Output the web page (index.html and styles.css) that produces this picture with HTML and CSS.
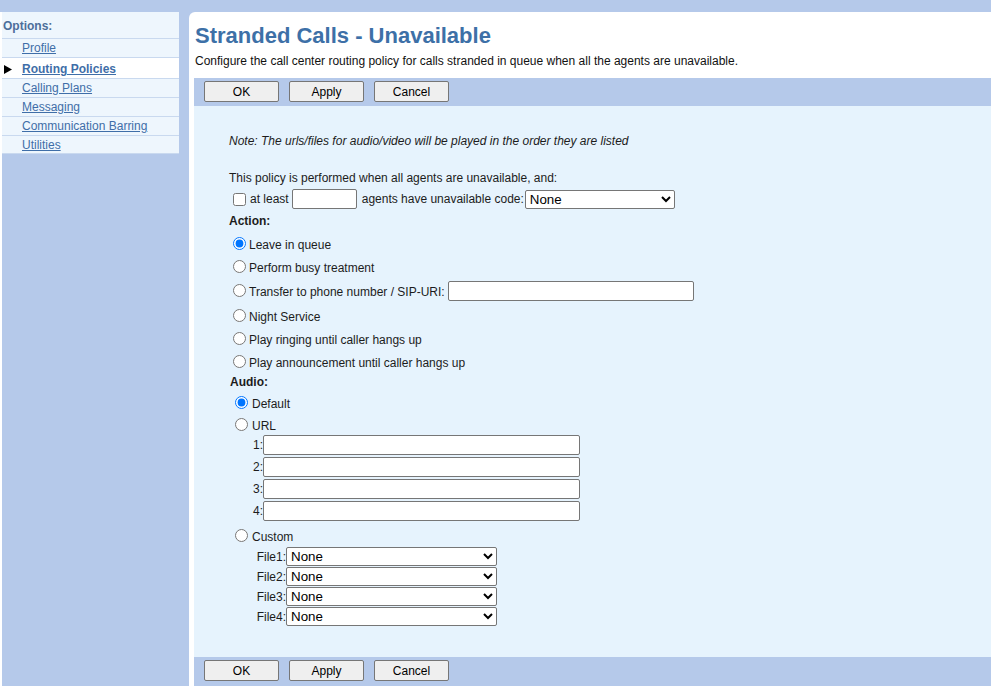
FILE: index.html
```html
<!DOCTYPE html>
<html>
<head>
<meta charset="utf-8">
<title>Stranded Calls - Unavailable</title>
<link rel="stylesheet" href="styles.css">
</head>
<body>
<div class="page">
  <aside class="side">
    <div class="menu">
      <div class="menu-head">Options:</div>
      <div class="menu-row"><a href="#">Profile</a></div>
      <div class="menu-row current">
        <svg class="arrow" width="8" height="9" viewBox="0 0 8 9"><polygon points="0,0 8,4.5 0,9" fill="#000"/></svg>
        <a href="#">Routing Policies</a>
      </div>
      <div class="menu-row"><a href="#">Calling Plans</a></div>
      <div class="menu-row"><a href="#">Messaging</a></div>
      <div class="menu-row"><a href="#">Communication Barring</a></div>
      <div class="menu-row"><a href="#">Utilities</a></div>
    </div>
  </aside>
  <main class="main">
    <div class="header">
      <h1 class="title">Stranded Calls - Unavailable</h1>
      <p class="desc">Configure the call center routing policy for calls stranded in queue when all the agents are unavailable.</p>
    </div>
    <div class="panel">
      <div class="bar bar-top">
        <button class="btn">OK</button>
        <button class="btn">Apply</button>
        <button class="btn">Cancel</button>
      </div>
      <div class="form">
        <div class="note">Note: The urls/files for audio/video will be played in the order they are listed</div>
        <div class="policy">This policy is performed when all agents are unavailable, and:</div>
        <div class="cond-row">
          <input type="checkbox" class="chk">
          <span>at least</span>
          <input type="text" class="txt count">
          <span class="agents">agents have unavailable code:</span>
          <select class="sel code"><option>None</option></select>
        </div>
        <div class="section-label">Action:</div>
        <div class="action-list">
          <label class="radio-row"><input type="radio" name="act" class="rad" checked><span class="rl">Leave in queue</span></label>
          <label class="radio-row"><input type="radio" name="act" class="rad"><span class="rl">Perform busy treatment</span></label>
          <label class="radio-row tall"><input type="radio" name="act" class="rad"><span class="rl">Transfer to phone number / SIP-URI:</span><input type="text" class="txt transfer"></label>
          <label class="radio-row"><input type="radio" name="act" class="rad"><span class="rl">Night Service</span></label>
          <label class="radio-row"><input type="radio" name="act" class="rad"><span class="rl">Play ringing until caller hangs up</span></label>
          <label class="radio-row"><input type="radio" name="act" class="rad"><span class="rl">Play announcement until caller hangs up</span></label>
        </div>
        <div class="section-label audio-label">Audio:</div>
        <div class="audio-list">
          <label class="radio-row audio"><input type="radio" name="aud" class="rad" checked><span class="rl">Default</span></label>
          <label class="radio-row audio url"><input type="radio" name="aud" class="rad"><span class="rl">URL</span></label>
          <div class="url-row"><span class="num">1:</span><input type="text" class="txt url-in"></div>
          <div class="url-row"><span class="num">2:</span><input type="text" class="txt url-in"></div>
          <div class="url-row"><span class="num">3:</span><input type="text" class="txt url-in"></div>
          <div class="url-row"><span class="num">4:</span><input type="text" class="txt url-in"></div>
          <label class="radio-row audio custom"><input type="radio" name="aud" class="rad"><span class="rl">Custom</span></label>
          <div class="file-row"><span class="flabel">File1:</span><select class="sel file"><option>None</option></select></div>
          <div class="file-row"><span class="flabel">File2:</span><select class="sel file"><option>None</option></select></div>
          <div class="file-row"><span class="flabel">File3:</span><select class="sel file"><option>None</option></select></div>
          <div class="file-row"><span class="flabel">File4:</span><select class="sel file"><option>None</option></select></div>
        </div>
      </div>
      <div class="bar bar-bottom">
        <button class="btn">OK</button>
        <button class="btn">Apply</button>
        <button class="btn">Cancel</button>
      </div>
    </div>
  </main>
</div>
</body>
</html>
```
FILE: styles.css
```css
html, body {
  margin: 0;
  padding: 0;
  height: 100%;
  overflow: hidden;
}
body {
  font-family: "Liberation Sans", Arial, sans-serif;
  font-size: 12px;
  color: #1c1c1c;
  background: #ffffff;
}
.page {
  box-sizing: border-box;
  height: 686px;
  padding-top: 12px;
  background: #b5c9ea;
  display: grid;
  grid-template-columns: 189px 1fr;
}
.side {
  border-left: 2px solid #ffffff;
  background: #b5c9ea;
}
.menu {
  width: 177px;
  background: #eef6fd;
}
.menu-head {
  height: 26px;
  line-height: 28px;
  font-weight: bold;
  color: #4d6e9a;
  padding-left: 1px;
  box-sizing: border-box;
}
.menu-row {
  display: flex;
  align-items: center;
  height: 19px;
  box-sizing: border-box;
  border-top: 1px solid #c9d9ef;
  padding-left: 20px;
  position: relative;
}
.menu-row:last-child {
  border-bottom: 1px solid #c9d9ef;
  height: 19px;
}
.menu-row.current {
  background: #ffffff;
  height: 21px;
  padding-top: 2px;
}
.menu-row a {
  color: #3f6ea8;
  text-decoration: underline;
}
.menu-row.current a {
  font-weight: bold;
}
.arrow {
  position: absolute;
  left: 2px;
  top: 7px;
}
.main {
  background: #ffffff;
  border-top-left-radius: 6px;
  padding-left: 5px;
  display: flex;
  flex-direction: column;
  min-height: 0;
}
.header {
  padding: 11px 0 9px 1px;
}
.title {
  margin: 0;
  font-size: 22px;
  line-height: 26px;
  font-weight: bold;
  color: #3d70a7;
}
.desc {
  margin: 4px 0 0 0;
  line-height: 16px;
  color: #111;
}
.panel {
  flex: 1;
  display: flex;
  flex-direction: column;
  background: #e6f3fd;
  min-height: 0;
}
.bar {
  background: #b5c9ea;
  display: flex;
  gap: 10px;
  padding-left: 10px;
  box-sizing: border-box;
}
.bar-top {
  height: 28px;
  padding-top: 3px;
}
.bar-bottom {
  height: 29px;
  padding-top: 3px;
}
.btn {
  width: 75px;
  height: 21px;
  font-family: "Liberation Sans", Arial, sans-serif;
  font-size: 12px;
  color: #000;
  background: #efefef;
  border: 1px solid #767676;
  border-radius: 2px;
  padding: 0;
}
.form {
  flex: 1;
  padding: 27px 0 0 35px;
  display: flex;
  flex-direction: column;
}
.note {
  font-style: italic;
  line-height: 16px;
}
.policy {
  margin-top: 21px;
  line-height: 16px;
}
.cond-row {
  margin-top: 3px;
  height: 20px;
  display: flex;
  align-items: center;
}
.chk {
  width: 13px;
  height: 13px;
  margin: 0 4px 0 4px;
}
.txt {
  box-sizing: border-box;
  height: 20px;
  border: 1px solid #767676;
  border-radius: 2px;
  background: #ffffff;
  margin: 0;
  padding: 1px 2px;
  font-family: "Liberation Sans", Arial, sans-serif;
  font-size: 13px;
}
.count {
  width: 65px;
  margin-left: 3px;
}
.agents {
  margin-left: 5px;
}
.sel {
  box-sizing: border-box;
  height: 19px;
  border: 1px solid #767676;
  border-radius: 2px;
  background: #ffffff;
  font-family: "Liberation Sans", Arial, sans-serif;
  font-size: 13.33px;
  color: #000;
  margin: 0;
  padding: 0;
}
.code {
  width: 150px;
  margin-left: 1px;
}
.section-label {
  margin-top: 4px;
  font-weight: bold;
  line-height: 16px;
}
.action-list {
  margin-top: 3px;
  display: flex;
  flex-direction: column;
}
.radio-row {
  display: flex;
  align-items: center;
  height: 23px;
}
.radio-row.tall {
  height: 26px;
}
.rl {
  padding-top: 2px;
}
.rad {
  width: 13px;
  height: 13px;
  margin: 0 3px 1px 4px;
}
.transfer {
  width: 246px;
  margin-left: 3px;
}
.audio-label {
  margin-top: 1px;
  padding-left: 1px;
}
.audio-list {
  margin-top: 2px;
  display: flex;
  flex-direction: column;
}
.radio-row.audio {
  height: 22px;
}
.radio-row.audio .rad {
  margin-left: 6px;
  margin-right: 4px;
}
.radio-row.url {
  height: 21px;
}
.radio-row.custom {
  margin-top: 2px;
}
.url-row {
  height: 22px;
  display: flex;
  align-items: flex-start;
}
.num {
  width: 34px;
  text-align: right;
  line-height: 21px;
}
.url-in {
  width: 317px;
}
.file-row {
  height: 20px;
  display: flex;
  align-items: flex-start;
}
.flabel {
  width: 57px;
  text-align: right;
  line-height: 20px;
}
.file {
  width: 211px;
}
```
